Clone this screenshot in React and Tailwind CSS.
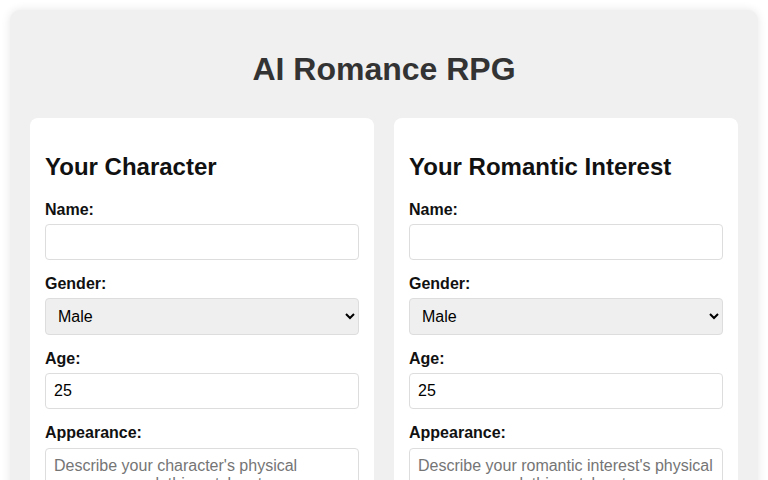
import { useState } from "react";

function Field({ label, children }) {
  return (
    <div className="mb-[15px]">
      <label className="mb-[5px] block text-base leading-[18.4px] font-bold">{label}</label>
      {children}
    </div>
  );
}

const inputClass =
  "block w-full rounded-[4px] border border-[#ddd] bg-white p-2 text-base leading-[18.4px] text-black placeholder:text-[#757575] outline-none";

function CharacterCard({ title, placeholder }) {
  const [name, setName] = useState("");
  const [gender, setGender] = useState("Male");
  const [age, setAge] = useState("25");
  const [appearance, setAppearance] = useState("");

  return (
    <div className="rounded-[8px] bg-white p-[15px]">
      <h2 className="my-[19.92px] text-2xl leading-[27.6px] font-bold">{title}</h2>
      <Field label="Name:">
        <input
          className={inputClass + " h-[36px]"}
          value={name}
          onChange={(e) => setName(e.target.value)}
        />
      </Field>
      <Field label="Gender:">
        <select
          className="block h-[36.4px] w-full rounded-[4px] border border-[#ddd] bg-[#efefef] px-2 text-base text-black"
          value={gender}
          onChange={(e) => setGender(e.target.value)}
        >
          <option>Male</option>
          <option>Female</option>
          <option>Non-binary</option>
        </select>
      </Field>
      <Field label="Age:">
        <input
          type="number"
          className={inputClass + " h-[36px]"}
          value={age}
          onChange={(e) => setAge(e.target.value)}
        />
      </Field>
      <Field label="Appearance:">
        <textarea
          rows={3}
          className={inputClass + " resize-y"}
          placeholder={placeholder}
          value={appearance}
          onChange={(e) => setAppearance(e.target.value)}
        />
      </Field>
    </div>
  );
}

export default function App() {
  return (
    <div className="min-h-screen bg-white p-[10px] font-['Liberation_Sans',Arial,sans-serif] text-[#111]">
      <div className="rounded-[10px] bg-[#f0f0f0] p-5 shadow-[0_0_10px_rgba(0,0,0,0.1)]">
        <h1 className="mt-[21.44px] mb-[30px] text-center text-[32px] leading-[36.8px] font-bold text-[#333]">
          AI Romance RPG
        </h1>
        <div className="grid grid-cols-2 gap-5">
          <CharacterCard
            title="Your Character"
            placeholder="Describe your character's physical appearance, clothing style, etc."
          />
          <CharacterCard
            title="Your Romantic Interest"
            placeholder="Describe your romantic interest's physical appearance, clothing style, etc."
          />
        </div>
      </div>
    </div>
  );
}
